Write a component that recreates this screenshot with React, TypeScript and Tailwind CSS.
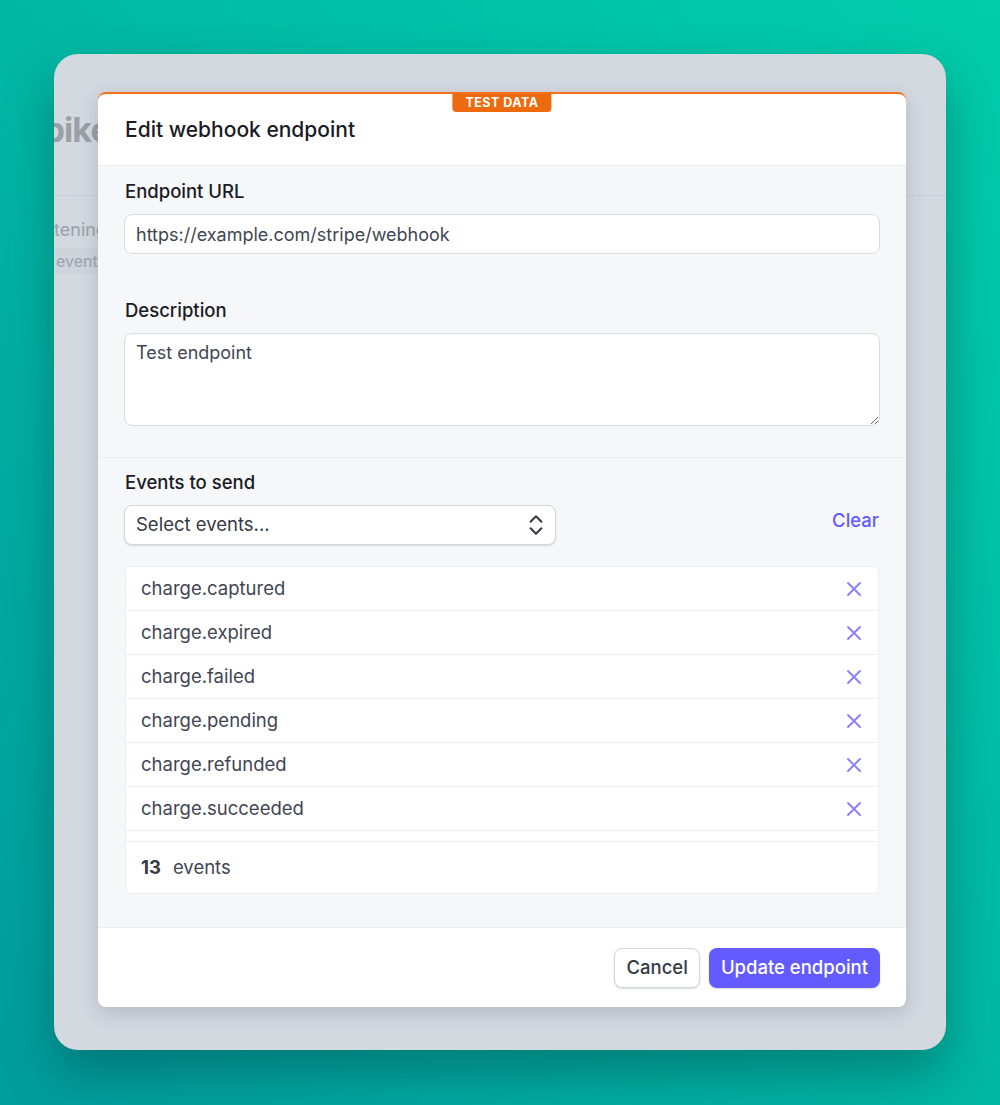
const events = [
  "charge.captured",
  "charge.expired",
  "charge.failed",
  "charge.pending",
  "charge.refunded",
  "charge.succeeded",
  "charge.updated",
]

function CloseIcon() {
  return (
    <svg width="16" height="16" viewBox="0 0 16 16" fill="none" className="text-[#8b7ffb]">
      <path d="M2 2l12 12M14 2L2 14" stroke="currentColor" strokeWidth="1.9" strokeLinecap="round" />
    </svg>
  )
}

function UpDownIcon() {
  return (
    <svg width="26" height="26" viewBox="0 0 24 24" fill="none" className="text-[#353a44]">
      <path d="m7 15 5 5 5-5M7 9l5-5 5 5" stroke="currentColor" strokeWidth="1.9" strokeLinecap="round" strokeLinejoin="round" />
    </svg>
  )
}

export default function App() {
  return (
    <div
      className="min-h-[1105px] w-full bg-gradient-to-bl from-[#00cdaa] via-[#00b8a4] to-[#009c9e] pt-[54px] pl-[54px]"
      style={{ fontFamily: "Inter, 'Noto Sans', sans-serif" }}
    >
      <div className="relative h-[996px] w-[892px] overflow-hidden rounded-[24px] bg-[#d4d8df] shadow-[0_24px_50px_rgba(0,70,70,0.45)]">
        {/* page underneath the modal, dimmed */}
        <div className="text-[#9ca1aa]">
          <div className="h-[142px] border-b border-[#c9ced6] pt-[52px]">
            <span className="-ml-[32px] block text-[34px] font-bold leading-[48px] tracking-tight text-[#9a9fa8]">Spike</span>
          </div>
          <div className="-ml-[24px] pt-[22px] text-[18px] leading-[24px]">Listening</div>
          <div className="mt-[6px] w-[220px] bg-[#cfd4db] pl-[2px] text-[16px] leading-[26px]">events</div>
        </div>

        {/* overlay */}
        <div className="absolute inset-0 pt-[38px] pl-[44px]">
          <div className="relative w-[808px] overflow-hidden rounded-[8px] border-t-2 border-[#f5711b] bg-white shadow-[0_6px_20px_rgba(40,50,70,0.18)]">
            <div className="absolute left-1/2 top-0 -translate-x-1/2 rounded-b-[4px] bg-[#ee6a0e] px-[13px] text-[12.5px] font-bold leading-[18px] tracking-[0.04em] text-white">
              TEST DATA
            </div>

            <div className="flex h-[72px] items-center border-b border-[#ebeef1] px-[27px]">
              <h2 className="text-[21px] font-medium text-[#1a1b25]">Edit webhook endpoint</h2>
            </div>

            <div className="bg-[#f6f7f9]">
              <div className="border-b border-[#ebeef1] px-[26px] pt-[13px] pb-[31px]">
                <label className="block pl-[1px] text-[18.5px] font-medium leading-[24px] text-[#1a1b25]">Endpoint URL</label>
                <input
                  readOnly
                  defaultValue="https://example.com/stripe/webhook"
                  className="mt-[11px] h-10 w-full rounded-[8px] border border-[#d8dce2] bg-white px-[11px] text-[18px] text-[#414552] outline-none"
                />
                <label className="mt-[44px] block pl-[1px] text-[18.5px] font-medium leading-[24px] text-[#1a1b25]">Description</label>
                <textarea
                  readOnly
                  defaultValue="Test endpoint"
                  className="mt-[11px] block h-[93px] w-full rounded-[8px] border border-[#d8dce2] bg-white px-[11px] py-[7px] text-[18px] leading-[24px] text-[#414552] outline-none"
                />
              </div>

              <div className="px-[26px] pt-[12px] pb-[33px]">
                <label className="block pl-[1px] text-[18.5px] font-medium leading-[24px] text-[#1a1b25]">Events to send</label>
                <div className="mt-[11px] flex items-center justify-between">
                  <div className="flex h-10 w-[432px] items-center justify-between rounded-[8px] border border-[#d2d7de] bg-white pl-[11px] pr-[6px] shadow-[0_1px_2px_rgba(0,0,0,0.12)]">
                    <span className="text-[18.5px] text-[#353a44]">Select events...</span>
                    <UpDownIcon />
                  </div>
                  <button className="mb-[9px] pr-[1px] text-[18.5px] font-medium text-[#635bff]">Clear</button>
                </div>

                <div className="mx-[1px] mt-[21px] overflow-hidden rounded-[6px] border border-[#ebeef1] bg-white">
                  <div className="h-[274px] overflow-hidden">
                    {events.map((e) => (
                      <div key={e} className="flex h-[44px] items-center justify-between border-b border-[#ebeef1] pl-[15px] pr-[16px]">
                        <span className="text-[18.5px] text-[#414552]">{e}</span>
                        <CloseIcon />
                      </div>
                    ))}
                  </div>
                  <div className="flex h-[52px] items-center border-t border-[#ebeef1] pl-[15px] text-[18.5px] text-[#414552]">
                    <span className="mr-[12px] font-bold text-[#353a44]">13</span>
                    <span>events</span>
                  </div>
                </div>
              </div>
            </div>

            <div className="flex h-[80px] items-center justify-end gap-[9px] border-t border-[#ebeef1] px-[26px]">
              <button className="h-10 rounded-[8px] border border-[#d2d7de] bg-white px-[11px] text-[18.5px] font-medium text-[#353a44] shadow-[0_1px_2px_rgba(0,0,0,0.15)]">
                Cancel
              </button>
              <button className="h-10 rounded-[8px] bg-[#635bff] px-[12px] text-[18.5px] font-medium text-white shadow-[0_1px_2px_rgba(0,0,0,0.15)]">
                Update endpoint
              </button>
            </div>
          </div>
        </div>
      </div>
    </div>
  )
}
